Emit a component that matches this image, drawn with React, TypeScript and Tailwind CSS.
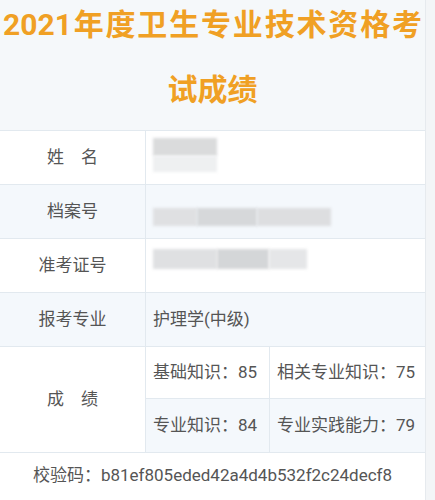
import React from "react";

const font = { fontFamily: 'Roboto, "Noto Sans CJK SC", "Noto Sans", sans-serif' };

function Blur({ w, h, shade = "bg-[#d4d6d8]" }: { w: string; h: string; shade?: string }) {
  return <div className={`${w} ${h} ${shade} blur-[1.5px]`} />;
}

function Row({
  label,
  children,
  alt,
}: {
  label: string;
  children: React.ReactNode;
  alt?: boolean;
}) {
  return (
    <div className={`flex h-[54px] border-b border-[#e2e9ef] ${alt ? "bg-[#f4f8fc]" : "bg-white"}`}>
      <div className="w-[146px] flex items-center justify-center border-r border-[#e2e9ef] text-[17px] text-[#555]">
        {label}
      </div>
      <div className="flex-1 flex items-center pl-[7px] text-[17px] text-[#555]">{children}</div>
    </div>
  );
}

export default function App() {
  return (
    <div className="flex w-[435px] h-[500px] overflow-hidden bg-white" style={font}>
      <div className="w-[426px] border-r border-[#e6eaee] flex flex-col">
        <div className="h-[131px] bg-[#f5f8fa] border-b border-[#e2e9ef] px-[3px] text-[#f0a024] font-bold text-[30px]">
          <div className="leading-[50px] text-justify [text-align-last:justify]">2021年度卫生专业技术资格考</div>
          <div className="leading-[80px] text-center">试成绩</div>
        </div>

        <Row label="姓　名">
          <div className="flex flex-col mt-[-6px]">
            <Blur w="w-[64px]" h="h-[18px]" shade="bg-[#dadbdc]" />
            <Blur w="w-[64px]" h="h-[16px]" shade="bg-[#eef0f1]" />
          </div>
        </Row>
        <Row label="档案号" alt>
          <div className="flex mt-[10px]">
            <Blur w="w-[44px]" h="h-[18px]" shade="bg-[#dfe0e2]" />
            <Blur w="w-[60px]" h="h-[18px]" shade="bg-[#d6d8da]" />
            <Blur w="w-[74px]" h="h-[18px]" shade="bg-[#dddee0]" />
          </div>
        </Row>
        <Row label="准考证号">
          <div className="flex mt-[-14px]">
            <Blur w="w-[64px]" h="h-[20px]" shade="bg-[#dfe0e2]" />
            <Blur w="w-[52px]" h="h-[20px]" shade="bg-[#d4d6d8]" />
            <Blur w="w-[38px]" h="h-[20px]" shade="bg-[#e5e6e8]" />
          </div>
        </Row>
        <Row label="报考专业" alt>
          护理学(中级)
        </Row>

        <div className="flex border-b border-[#e2e9ef] bg-white">
          <div className="w-[146px] flex items-center justify-center border-r border-[#e2e9ef] text-[17px] text-[#555]">
            成　绩
          </div>
          <div className="flex-1 flex flex-col text-[17px] text-[#555]">
            <div className="flex h-[52px] border-b border-[#e2e9ef] bg-white">
              <div className="w-[124px] flex items-center pl-[7px] pt-[-2px] border-r border-[#e2e9ef]">基础知识：85</div>
              <div className="flex-1 flex items-center pl-[7px]">相关专业知识：75</div>
            </div>
            <div className="flex h-[53px] bg-[#f4f8fc]">
              <div className="w-[124px] flex items-center pl-[7px] border-r border-[#e2e9ef]">专业知识：84</div>
              <div className="flex-1 flex items-center pl-[7px]">专业实践能力：79</div>
            </div>
          </div>
        </div>

        <div className="flex-1 bg-white flex items-start justify-center pt-[10px] text-[17px] text-[#555]">
          校验码：b81ef805eded42a4d4b532f2c24decf8
        </div>
      </div>
      <div className="flex-1 bg-[#f3f5f7]" />
    </div>
  );
}
